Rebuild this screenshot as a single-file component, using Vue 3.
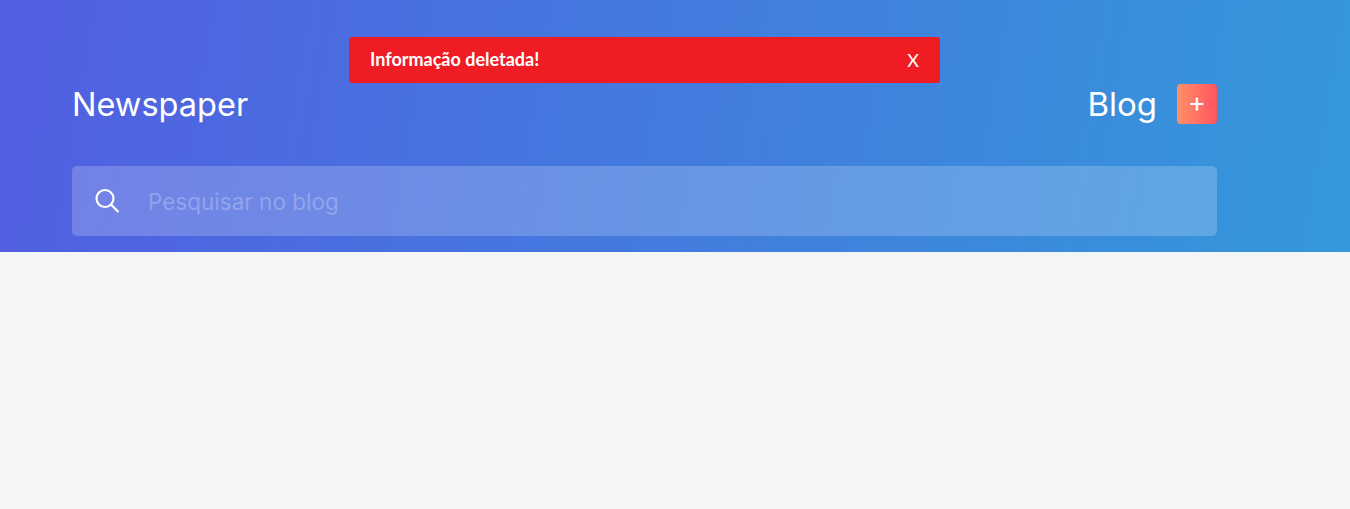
<script setup>
import { ref } from 'vue'

const showAlert = ref(true)
const search = ref('')
</script>

<template>
  <div class="page">
    <header class="header">
      <div v-if="showAlert" class="alert">
        <strong>Informação deletada!</strong>
        <button class="alert-close" @click="showAlert = false">X</button>
      </div>

      <div class="top">
        <h1>Newspaper</h1>
        <div class="blog">
          <span>Blog</span>
          <button class="add">+</button>
        </div>
      </div>

      <div class="search">
        <svg width="26" height="26" viewBox="0 0 26 26" fill="none" stroke="#fff" stroke-width="2.2">
          <circle cx="11" cy="10.5" r="8.5" />
          <path d="M17 16.5l7.5 7.5" />
        </svg>
        <input v-model="search" type="text" placeholder="Pesquisar no blog" />
      </div>
    </header>
  </div>
</template>

<style>
html,
body {
  margin: 0;
  background: #f4f5f7;
}
</style>

<style scoped>
.page {
  min-height: 509px;
  background: #f4f5f7;
}

.header {
  position: relative;
  box-sizing: border-box;
  height: 252px;
  padding: 84px 133px 16px 72px;
  background: linear-gradient(100deg, #525ee1, #3498db);
}

.alert {
  position: absolute;
  top: 37px;
  left: 349px;
  box-sizing: border-box;
  width: 591px;
  height: 46px;
  padding: 0 21px 3px;
  display: flex;
  align-items: center;
  justify-content: space-between;
  background: #ef1c24;
  border-radius: 3px;
  color: #fff;
  font-family: "Lato", sans-serif;
  font-size: 18px;
}

.alert-close {
  padding: 3px 0 0;
  border: 0;
  background: none;
  color: #fff;
  font-family: "Lato", sans-serif;
  font-size: 18px;
  cursor: pointer;
}

.top {
  height: 40px;
  margin-bottom: 42px;
  display: flex;
  align-items: center;
  justify-content: space-between;
  color: #fff;
}

h1 {
  margin: 0;
  font-family: "Inter", sans-serif;
  font-size: 32.5px;
  font-weight: 400;
}

.blog {
  display: flex;
  align-items: center;
  gap: 20px;
  font-family: "Inter", sans-serif;
  font-size: 33px;
}

.add {
  width: 40px;
  height: 40px;
  padding: 0 0 3px;
  border: 0;
  border-radius: 4px;
  background: linear-gradient(90deg, #ff9068, #ff5560);
  color: #fff;
  font-family: "Inter", sans-serif;
  font-size: 27px;
  font-weight: 400;
  cursor: pointer;
}

.search {
  height: 70px;
  padding-left: 22px;
  display: flex;
  align-items: center;
  gap: 28px;
  background: rgba(255, 255, 255, 0.2);
  border-radius: 5px;
}

.search input {
  flex: 1;
  min-width: 0;
  padding: 0;
  border: 0;
  outline: 0;
  background: transparent;
  color: #fff;
  font-family: "Inter", sans-serif;
  font-size: 22.5px;
}

.search input::placeholder {
  color: rgba(255, 255, 255, 0.25);
}
</style>
